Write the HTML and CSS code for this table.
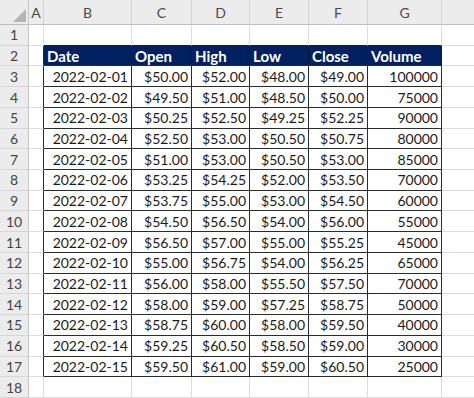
FILE: index.html
```html
<!DOCTYPE html>
<html>
<head>
<meta charset="utf-8">
<link rel="stylesheet" href="styles.css">
</head>
<body>
<div class="sheet">
  <div class="c corner"><span class="tri"></span></div>
  <div class="c ch">A</div><div class="c ch">B</div><div class="c ch">C</div><div class="c ch">D</div><div class="c ch">E</div><div class="c ch">F</div><div class="c ch">G</div><div class="c ch"></div>

  <div class="c rh">1</div><div class="c"></div><div class="c top"></div><div class="c top"></div><div class="c top"></div><div class="c top"></div><div class="c top"></div><div class="c top"></div><div class="c"></div>

  <div class="c rh">2</div><div class="c edge"></div><div class="c hd">Date</div><div class="c hd">Open</div><div class="c hd">High</div><div class="c hd">Low</div><div class="c hd">Close</div><div class="c hd">Volume</div><div class="c"></div>

  <div class="c rh">3</div><div class="c edge"></div><div class="c d">2022-02-01</div><div class="c d">$50.00</div><div class="c d">$52.00</div><div class="c d">$48.00</div><div class="c d">$49.00</div><div class="c d">100000</div><div class="c"></div>
  <div class="c rh">4</div><div class="c edge"></div><div class="c d">2022-02-02</div><div class="c d">$49.50</div><div class="c d">$51.00</div><div class="c d">$48.50</div><div class="c d">$50.00</div><div class="c d">75000</div><div class="c"></div>
  <div class="c rh">5</div><div class="c edge"></div><div class="c d">2022-02-03</div><div class="c d">$50.25</div><div class="c d">$52.50</div><div class="c d">$49.25</div><div class="c d">$52.25</div><div class="c d">90000</div><div class="c"></div>
  <div class="c rh">6</div><div class="c edge"></div><div class="c d">2022-02-04</div><div class="c d">$52.50</div><div class="c d">$53.00</div><div class="c d">$50.50</div><div class="c d">$50.75</div><div class="c d">80000</div><div class="c"></div>
  <div class="c rh">7</div><div class="c edge"></div><div class="c d">2022-02-05</div><div class="c d">$51.00</div><div class="c d">$53.00</div><div class="c d">$50.50</div><div class="c d">$53.00</div><div class="c d">85000</div><div class="c"></div>
  <div class="c rh">8</div><div class="c edge"></div><div class="c d">2022-02-06</div><div class="c d">$53.25</div><div class="c d">$54.25</div><div class="c d">$52.00</div><div class="c d">$53.50</div><div class="c d">70000</div><div class="c"></div>
  <div class="c rh">9</div><div class="c edge"></div><div class="c d">2022-02-07</div><div class="c d">$53.75</div><div class="c d">$55.00</div><div class="c d">$53.00</div><div class="c d">$54.50</div><div class="c d">60000</div><div class="c"></div>
  <div class="c rh">10</div><div class="c edge"></div><div class="c d">2022-02-08</div><div class="c d">$54.50</div><div class="c d">$56.50</div><div class="c d">$54.00</div><div class="c d">$56.00</div><div class="c d">55000</div><div class="c"></div>
  <div class="c rh">11</div><div class="c edge"></div><div class="c d">2022-02-09</div><div class="c d">$56.50</div><div class="c d">$57.00</div><div class="c d">$55.00</div><div class="c d">$55.25</div><div class="c d">45000</div><div class="c"></div>
  <div class="c rh">12</div><div class="c edge"></div><div class="c d">2022-02-10</div><div class="c d">$55.00</div><div class="c d">$56.75</div><div class="c d">$54.00</div><div class="c d">$56.25</div><div class="c d">65000</div><div class="c"></div>
  <div class="c rh">13</div><div class="c edge"></div><div class="c d">2022-02-11</div><div class="c d">$56.00</div><div class="c d">$58.00</div><div class="c d">$55.50</div><div class="c d">$57.50</div><div class="c d">70000</div><div class="c"></div>
  <div class="c rh">14</div><div class="c edge"></div><div class="c d">2022-02-12</div><div class="c d">$58.00</div><div class="c d">$59.00</div><div class="c d">$57.25</div><div class="c d">$58.75</div><div class="c d">50000</div><div class="c"></div>
  <div class="c rh">15</div><div class="c edge"></div><div class="c d">2022-02-13</div><div class="c d">$58.75</div><div class="c d">$60.00</div><div class="c d">$58.00</div><div class="c d">$59.50</div><div class="c d">40000</div><div class="c"></div>
  <div class="c rh">16</div><div class="c edge"></div><div class="c d">2022-02-14</div><div class="c d">$59.25</div><div class="c d">$60.50</div><div class="c d">$58.50</div><div class="c d">$59.00</div><div class="c d">30000</div><div class="c"></div>
  <div class="c rh">17</div><div class="c edge"></div><div class="c d">2022-02-15</div><div class="c d">$59.50</div><div class="c d">$61.00</div><div class="c d">$59.00</div><div class="c d">$60.50</div><div class="c d">25000</div><div class="c"></div>

  <div class="c rh">18</div><div class="c"></div><div class="c"></div><div class="c"></div><div class="c"></div><div class="c"></div><div class="c"></div><div class="c"></div><div class="c"></div>
</div>
</body>
</html>
```
FILE: styles.css
```css
html, body {
  margin: 0;
  padding: 0;
  background: #ffffff;
}
body {
  font-family: Lato, "Liberation Sans", sans-serif;
  font-size: 14px;
  color: #1a1a1a;
  overflow: hidden;
}
.sheet {
  display: grid;
  grid-template-columns: 29px 15px 88px 60px 58px 59px 59px 74px 40px;
  grid-template-rows: 25px repeat(18, 1fr);
  width: 482px;
  height: 398px;
}
.c {
  box-sizing: border-box;
  border-right: 1px solid #dcdcdc;
  border-bottom: 1px solid #dcdcdc;
  display: flex;
  align-items: center;
  padding: 0 3px;
  white-space: nowrap;
  overflow: hidden;
}
.corner {
  background: #ececec;
  border-right: 1px solid #c6c6c6;
  border-bottom: 1px solid #bdbdbd;
  justify-content: flex-end;
  align-items: flex-end;
  padding: 0 2px 2px 0;
}
.tri {
  width: 0;
  height: 0;
  border-left: 13px solid transparent;
  border-bottom: 13px solid #b4b4b4;
}
.ch {
  background: #ececec;
  border-right: 1px solid #d2d2d2;
  border-bottom: 1px solid #bdbdbd;
  justify-content: center;
  color: #4a4a4a;
  padding: 0;
}
.rh {
  background: #ececec;
  border-right: 1px solid #c6c6c6;
  border-bottom: 1px solid #d6d6d6;
  justify-content: center;
  color: #444;
  padding: 0;
}
.top {
  border-bottom-color: #002060;
}
.edge {
  border-right-color: #2b2b2b;
}
.hd {
  background: #002060;
  color: #ffffff;
  font-weight: bold;
  font-size: 15px;
  border-right-color: #0c1a3a;
  border-bottom-color: #2b2b2b;
}
.d {
  justify-content: flex-end;
  border-right-color: #2b2b2b;
  border-bottom-color: #2b2b2b;
  color: #1a1a1a;
}
```
